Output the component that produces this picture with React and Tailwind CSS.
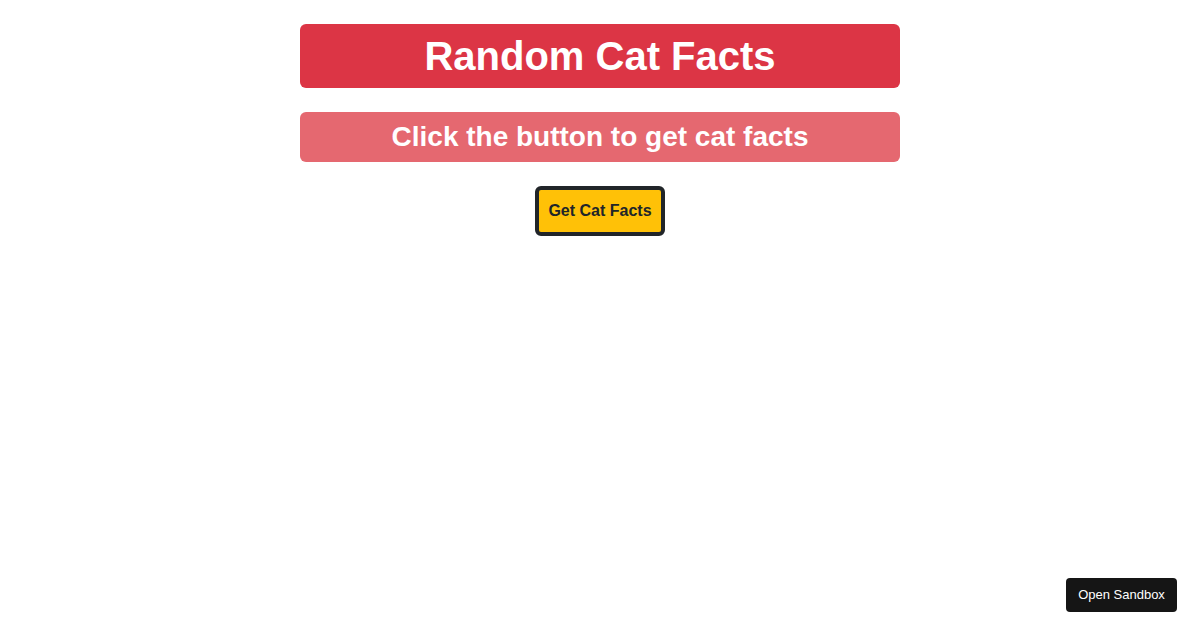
import { useState } from "react";

export default function App() {
  const [facts, setFacts] = useState([]);

  return (
    <div className="min-h-screen bg-white font-['Liberation_Sans',Arial,sans-serif]">
      <div className="mx-auto flex w-[600px] flex-col items-center pt-6">
        <h1 className="flex h-16 w-full items-center justify-center rounded-md bg-[#dc3545] text-[40px] font-bold text-white">
          Random Cat Facts
        </h1>
        <h2 className="mt-6 flex h-[50px] w-full items-center justify-center rounded-md bg-[#e56870] text-[28px] font-bold text-white">
          Click the button to get cat facts
        </h2>
        <button
          type="button"
          onClick={() => setFacts([...facts])}
          className="mt-6 h-[50px] w-[130px] rounded-md border-4 border-[#212529] bg-[#ffc107] text-base font-bold text-[#212529]"
        >
          Get Cat Facts
        </button>
        {facts.map((fact, index) => (
          <p key={index}>{fact}</p>
        ))}
      </div>

      <a className="fixed bottom-[18px] right-[23px] flex h-[34px] w-[111px] items-center justify-center rounded bg-[#151515] text-[13px] text-white">
        Open Sandbox
      </a>
    </div>
  );
}
